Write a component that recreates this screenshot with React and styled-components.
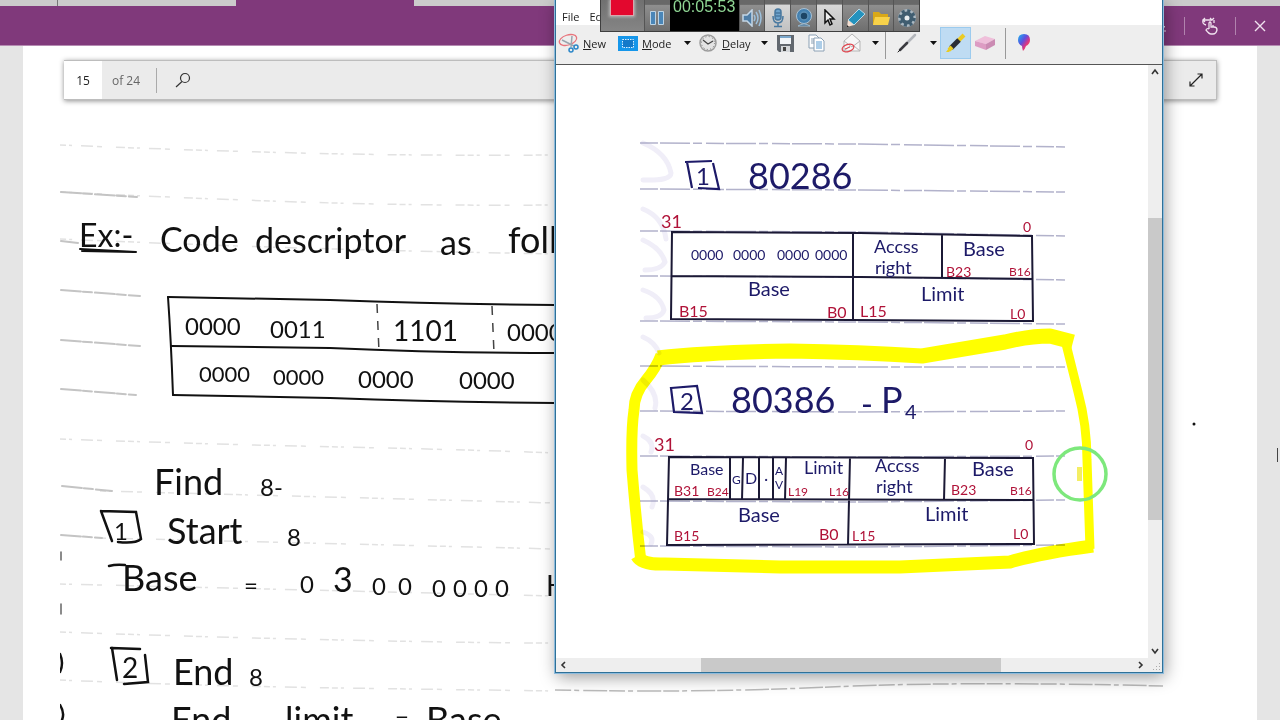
import React from "react";
import styled, { createGlobalStyle } from "styled-components";

const Global = createGlobalStyle`
  * { box-sizing: border-box; }
  html, body { margin: 0; padding: 0; }
  body { font-family: "Open Sans", "Noto Sans", sans-serif; overflow: hidden; }
  button { font: inherit; color: inherit; border: 0; padding: 0; margin: 0; background: none; }
  svg { display: block; flex: none; }
`;

const Desktop = styled.div`
  position: relative;
  height: 100vh;
  overflow: hidden;
  background: #fff;
`;

/* ---------- document reader ---------- */
const Reader = styled.main`
  display: flex;
  flex-direction: column;
  height: 100%;
`;
const TabStrip = styled.nav`
  display: flex;
  flex: none;
  height: 6px;
  background: #cbcbcb;
`;
const Tab = styled.button`
  width: ${(p) => p.$width}px;
  background: ${(p) => (p.$active ? "#80397b" : "transparent")};
  border-right: ${(p) => (p.$divider ? "1px solid #777" : "0")};
`;
const TitleBar = styled.header`
  display: flex;
  flex: none;
  align-items: center;
  justify-content: flex-end;
  height: 40px;
  background: #80397b;
  border-bottom: 1px solid #b58bb2;
  color: #f0e2ef;
`;
const TitleButton = styled.button`
  display: grid;
  place-items: center;
  width: ${(p) => p.$width || 50}px;
  height: 18px;
  padding-left: ${(p) => (p.$last ? 4 : 0)}px;
  border-left: ${(p) => (p.$divider ? "1px solid #b183ae" : "0")};
`;
const PageArea = styled.div`
  flex: 1;
  min-height: 0;
  overflow: hidden;
  padding: 0 23px;
  background: linear-gradient(90deg, #e5e5e5 23px, #fff 23px, #fff calc(100% - 23px), #e5e5e5 calc(100% - 23px));
`;
const PageTools = styled.div`
  display: flex;
  align-items: center;
  height: 40px;
  margin: 14px 40px 0 41px;
  background: #ebebeb;
  border: 1px solid #bdbdbd;
  border-left: 0;
  box-shadow: 0 1px 5px rgba(0, 0, 0, 0.45);
  font-size: 12px;
  color: #666;
`;
const PageNumber = styled.input`
  width: 38px;
  height: 38px;
  border: 0;
  background: #fff;
  text-align: center;
  font: 12px "Open Sans", sans-serif;
  color: #222;
`;
const PageTotal = styled.label`
  padding: 0 16px 0 10px;
`;
const ToolRule = styled.span`
  width: 1px;
  height: 25px;
  background: #aaa;
`;
const PageToolButton = styled.button`
  display: grid;
  place-items: center;
  width: 40px;
  height: 38px;
  margin-left: ${(p) => (p.$end ? "auto" : "6px")};
`;
const PageScan = styled.svg`
  margin-left: 37px;
`;
const ScrollMark = styled.span`
  position: absolute;
  right: 2px;
  top: 448px;
  width: 1px;
  height: 14px;
  background: #444;
`;

/* ---------- snipping window ---------- */
const SnipWindow = styled.section`
  position: absolute;
  left: 555px;
  top: 0;
  width: 608px;
  height: 673px;
  display: flex;
  flex-direction: column;
  background: #fff;
  border: 1px solid #2f7198;
  border-top: 0;
  box-shadow: 0 0 0 1px #8dbbdc, 2px 4px 16px rgba(0, 0, 0, 0.4);
`;
const MenuBar = styled.div`
  display: flex;
  flex: none;
  align-items: flex-end;
  gap: 10px;
  height: 25px;
  padding: 0 6px;
  font-size: 11px;
  line-height: 16px;
  color: #222;
`;
const SnipTools = styled.div`
  display: flex;
  flex: none;
  align-items: center;
  height: 40px;
  padding: 0 2px 3px;
  background: #eee;
  border-bottom: 1px solid #555;
  font-size: 11px;
  color: #222;
`;
const ToolButton = styled.button`
  display: flex;
  align-items: center;
  justify-content: ${(p) => (p.$label ? "flex-start" : "center")};
  gap: 4px;
  flex: none;
  width: ${(p) => p.$width}px;
  height: 32px;
  background: ${(p) => (p.$selected ? "#bfdcf3" : "transparent")};
  outline: ${(p) => (p.$selected ? "1px solid #9ccbee" : "0")};
  outline-offset: -1px;
`;
const Key = styled.u`
  text-decoration-thickness: 1px;
  text-underline-offset: 1px;
`;
const Separator = styled.span`
  flex: none;
  width: 1px;
  height: 31px;
  margin-left: ${(p) => (p.$spaced ? 6 : 0)}px;
  background: #999;
`;
const SnipBody = styled.div`
  flex: 1;
  min-height: 0;
  display: grid;
  grid-template-columns: 1fr 14px;
  grid-template-rows: 1fr 14px;
`;
const Canvas = styled.div`
  overflow: hidden;
`;
const Track = styled.div`
  display: flex;
  flex-direction: ${(p) => (p.$vertical ? "column" : "row")};
  background: #eee;
`;
const ArrowButton = styled.button`
  display: grid;
  place-items: center;
  width: 14px;
  height: 14px;
`;
const TrackSpace = styled.span`
  flex: ${(p) => p.$share} 0 0;
`;
const Thumb = styled.span`
  flex: ${(p) => p.$share} 0 0;
  background: #c9c9c9;
`;
const Corner = styled.div`
  display: grid;
  place-items: end;
  background: #eee;
`;

/* ---------- screen recorder ---------- */
const Recorder = styled.aside`
  position: absolute;
  left: 600px;
  top: 0;
  width: 320px;
  height: 32px;
  display: flex;
  background: #6b6b6b;
  border: 1px solid #3f3f3f;
  border-top: 0;
`;
const RecordButton = styled.button`
  width: 43px;
  display: flex;
  justify-content: center;
  background: linear-gradient(#707070, #858585);
`;
const RecordSquare = styled.span`
  width: 24px;
  height: 16px;
  background: #e3082e;
  border: 1px solid #d9a5ab;
  border-top: 0;
  box-shadow: 0 0 3px 1px #b9b9b9;
`;
const Cell = styled.button`
  display: grid;
  place-items: center;
  width: ${(p) => p.$width || 26}px;
  height: 31px;
  padding-top: 5px;
  border-left: 1px solid #555;
  background: ${(p) =>
    p.$lit
      ? "linear-gradient(#686868 4px, #555 4px, #d8d8d8 5px, #c1c1c1)"
      : "linear-gradient(#686868 4px, #4c4c4c 4px, #8f8f8f 5px, #6e6e6e)"};
`;
const Timer = styled.output`
  width: 69px;
  height: 31px;
  background: #000;
  color: #8fd694;
  font: 16px/14px "Liberation Sans", sans-serif;
  text-align: center;
`;

const Caret = () => (
  <svg width="8" height="5" viewBox="0 0 8 5" aria-hidden="true">
    <path d="M0 0h7L3.500 4z" fill="#111" />
  </svg>
);
const Chevron = ({ d }) => (
  <svg width="8" height="8" viewBox="0 0 8 8" fill="none" stroke="#333" strokeWidth="1.600" aria-hidden="true">
    <path d={d} />
  </svg>
);

const INK = "#111";
const BLUE = "#1d1a68";
const RED = "#b01238";

/* A handwritten word: [x, baseline, size, text] */
const Words = ({ items, fill }) => (
  <g fill={fill} fontFamily="Lato, sans-serif">
    {items.map(([x, y, size, text], i) => (
      <text key={i} x={x} y={y} fontSize={size}>
        {text}
      </text>
    ))}
  </g>
);

const NOTE_WORDS = [
  [79, 247, 32, "Ex:-"],
  [160, 252, 34, "Code"],
  [255, 253, 34, "descriptor"],
  [440, 255, 34, "as"],
  [508, 253, 36, "follows"],
  [185, 335, 24, "0000"],
  [270, 338, 24, "0011"],
  [393, 341, 28, "1101"],
  [507, 341, 24, "0000"],
  [199, 382, 22, "0000"],
  [273, 385, 22, "0000"],
  [358, 388, 24, "0000"],
  [459, 389, 24, "0000"],
  [154, 495, 36, "Find"],
  [260, 496, 24, "8-"],
  [114, 540, 24, "1"],
  [167, 544, 36, "Start"],
  [287, 546, 24, "8"],
  [122, 591, 36, "Base"],
  [244, 594, 24, "="],
  [300, 593, 24, "0"],
  [333, 592, 34, "3"],
  [372, 595, 24, "0"],
  [398, 595, 24, "0"],
  [432, 597, 24, "0"],
  [453, 597, 24, "0"],
  [474, 597, 24, "0"],
  [495, 597, 24, "0"],
  [546, 596, 28, "H"],
  [122, 678, 28, "2"],
  [173, 685, 36, "End"],
  [249, 686, 24, "8"],
  [171, 733, 36, "End"],
  [285, 733, 36, "limit"],
  [395, 727, 24, "="],
  [426, 733, 36, "Base"],
];

const BLUE_WORDS = [
  [696, 185, 24, "1"],
  [748, 189, 36, "80286"],
  [691, 260, 14, "0000"],
  [733, 260, 14, "0000"],
  [777, 260, 14, "0000"],
  [815, 260, 14, "0000"],
  [874, 253, 18, "Accss"],
  [875, 274, 18, "right"],
  [963, 256, 20, "Base"],
  [748, 296, 20, "Base"],
  [921, 301, 20, "Limit"],
  [680, 410, 24, "2"],
  [731, 413, 36, "80386"],
  [861, 416, 32, "-"],
  [881, 413, 36, "P"],
  [905, 419, 20, "4"],
  [690, 475, 16, "Base"],
  [732, 484, 12, "G"],
  [745, 484, 16, "D"],
  [764, 481, 18, "."],
  [775, 475, 12, "A"],
  [775, 489, 12, "V"],
  [804, 474, 18, "Limit"],
  [875, 472, 18, "Accss"],
  [876, 493, 18, "right"],
  [972, 476, 20, "Base"],
  [738, 522, 20, "Base"],
  [925, 521, 20, "Limit"],
];

const RED_WORDS = [
  [661, 228, 18, "31"],
  [1023, 232, 14, "0"],
  [946, 277, 14, "B23"],
  [1009, 276, 12, "B16"],
  [679, 317, 16, "B15"],
  [827, 318, 16, "B0"],
  [860, 317, 16, "L15"],
  [1010, 319, 14, "L0"],
  [654, 451, 18, "31"],
  [1025, 450, 14, "0"],
  [674, 496, 14, "B31"],
  [707, 496, 12, "B24"],
  [788, 496, 12, "L19"],
  [829, 496, 12, "L16"],
  [951, 495, 14, "B23"],
  [1010, 495, 12, "B16"],
  [674, 541, 14, "B15"],
  [819, 540, 16, "B0"],
  [852, 541, 14, "L15"],
  [1013, 539, 14, "L0"],
];

const NoteScan = () => (
  <PageScan width="1150" height="620" viewBox="60 100 1150 620" fill="none" strokeLinecap="round">
    <g stroke="#e2e2e2" strokeWidth="1.500" strokeDasharray="6 3 3 9 12 4 5 14 9 3" strokeLinecap="butt">
      <path d="M60 145Q180 150 300 153T555 155M60 192Q180 198 300 202T555 205M60 239Q200 245 300 248T555 254" />
      <path d="M60 439Q200 444 340 447T555 453M100 491L555 503M100 538L555 549M60 584L555 596" />
      <path d="M60 632Q200 637 340 640T555 643M60 680Q200 686 340 688T555 691" />
    </g>
    <path
      d="M555 690Q700 693 830 687T1163 686"
      stroke="#bbb"
      strokeWidth="1.500"
      strokeDasharray="16 3 5 4 24 2"
      strokeLinecap="butt"
    />
    <g stroke="#c4c4c4" strokeWidth="2" strokeDasharray="20 2 9 3">
      <path d="M61 192L137 197" />
      <path d="M61 241L78 243M61 290L140 296M61 340L140 346M61 389L136 395M62 486L112 491M61 535L102 538" />
    </g>
    <path d="M61 552v8M61 604v10" stroke="#666" strokeWidth="1.500" />
    <path d="M60 654q4 9 0 18M60 705q5 8 2 15" stroke={INK} strokeWidth="2.500" />
    <g stroke={INK} strokeWidth="2">
      <path d="M80 249L136 252M82 251L134 252" />
      <path d="M168 297Q171 340 173 395" />
      <path d="M168 297L330 300Q440 304 555 305M171 346L330 348Q440 353 555 353M173 395L330 398Q440 402 555 403" />
    </g>
    <path d="M377 304L379 352M492 306L494 353" stroke="#444" strokeWidth="1.500" strokeDasharray="9 8" strokeLinecap="butt" />
    <g stroke={INK} strokeWidth="2.500">
      <path d="M101 511L136 512L141 539Q135 544 118 542M101 511L112 541" />
      <path d="M111 648L140 649M112 648L117 680M145 655L148 682L124 684" />
    </g>
    <path d="M109 566Q116 564 125 565" stroke={INK} strokeWidth="2.500" />
    <Words items={NOTE_WORDS} fill={INK} />
    <circle cx="1194" cy="424" r="1.500" fill="#111" />
  </PageScan>
);

const RULES = [
  [143, 147],
  [189, 192],
  [231, 236],
  [276, 280],
  [321, 324],
  [366, 367],
  [411, 411],
  [456, 456],
  [501, 500],
  [546, 545],
];

const SnipScan = () => (
  <svg width="592" height="592" viewBox="556 65 592 592" fill="none">
    <g stroke="#f0eef8" strokeWidth="5" strokeLinecap="round">
      <path d="M643 143q24 10 28 30q0 8-28 7M643 209q20 8 23 30M643 240q18 8 22 22q-4 8-20 8M643 290q18 6 21 20q-2 8-18 8" />
      <path d="M643 337q12 5 16 16M643 380q16 14 12 28M643 436q12 6 8 16M643 487q14 8 9 20M643 532q12 4 8 12" />
    </g>
    {RULES.map(([a, b]) => (
      <path
        key={a}
        d={`M640 ${a}L860 ${a + 1}L1065 ${b}`}
        stroke="#9291b5"
        strokeWidth="1.500"
        strokeDasharray="18 2 30 3 9 4"
        opacity="0.700"
      />
    ))}
    <g stroke="#1b1935" strokeWidth="2">
      <path d="M672 232L860 233L1032 236L1033 321L850 320L671 319ZM672 276L860 277L1033 279M853 234V320M942 235V278" />
      <path d="M669 457L1033 458L1034 544L667 545ZM669 499L1034 500M850 457L848 545M945 458L944 500" />
      <path d="M730 457V499M743 458L742 500M759 458V500M773 458V500M786 458L785 500" />
    </g>
    <g stroke={BLUE} strokeWidth="2.200">
      <path d="M685 162L712 161M687 162L692 188M713 163L719 189L698 188" />
      <path d="M671 388L697 386L702 413L674 412Z" />
    </g>
    <Words items={BLUE_WORDS} fill={BLUE} />
    <Words items={RED_WORDS} fill={RED} />
    <g stroke="#ffff00" style={{ mixBlendMode: "multiply" }}>
      <path
        d="M1073 342L1050 336Q1030 336 1005 342L922 356Q860 352 790 351Q710 352 658 358"
        strokeWidth="15"
        strokeLinejoin="round"
      />
      <path d="M661 355Q656 368 646 380Q634 394 634 410Q631 430 632 470Q636 520 641 562" strokeWidth="11" />
      <path d="M637 556Q642 565 665 564L780 567L900 567L1010 562Q1040 553 1093 546" strokeWidth="13" />
      <path d="M1066 344L1078 392Q1087 425 1087 460L1090 549" strokeWidth="9" />
    </g>
    <rect x="1077" y="467" width="5" height="14" fill="#f4ee63" />
    <circle cx="1080" cy="474" r="26" stroke="#7de87c" strokeWidth="3.500" />
  </svg>
);

export default function App() {
  return (
    <Desktop>
      <Global />
      <Reader>
        <TabStrip>
          <Tab $width={58} $divider aria-label="Tab 1" />
          <Tab $width={178} aria-label="Tab 2" />
          <Tab $width={178} $active aria-label="Tab 3" />
        </TabStrip>
        <TitleBar>
          <TitleButton aria-label="Share" $width={44}>
            <svg width="14" height="14" viewBox="0 0 14 14" fill="none" stroke="currentColor">
              <path d="M3 8h7M7 5l3 3M3 12h8" />
            </svg>
          </TitleButton>
          <TitleButton aria-label="Touch mode" $divider $width={51}>
            <svg width="18" height="18" viewBox="0 0 18 18" fill="none" stroke="currentColor" strokeWidth="1.300">
              <path d="M5 8Q1 7 2 3h9M4 1L2 3l2 2M9 1l2 2 2-2M13 3v3" />
              <path d="M8 12V6q1-2 2 0v4h3q3 0 3 3-1 4-4 4h-2q-2 0-5-4 1-2 3-1M12 10V8" />
            </svg>
          </TitleButton>
          <TitleButton aria-label="Close" $divider $last $width={45}>
            <svg width="12" height="12" viewBox="0 0 12 12" fill="none" stroke="currentColor" strokeWidth="1.400">
              <path d="M1 1l10 10M11 1L1 11" />
            </svg>
          </TitleButton>
        </TitleBar>
        <PageArea>
          <PageTools>
            <PageNumber id="page" defaultValue="15" />
            <PageTotal htmlFor="page">of 24</PageTotal>
            <ToolRule />
            <PageToolButton aria-label="Search">
              <svg width="16" height="16" viewBox="0 0 16 16" fill="none" stroke="#333" strokeWidth="1.200">
                <circle cx="10" cy="6" r="4.500" />
                <path d="M7 9.500L1 15" />
              </svg>
            </PageToolButton>
            <PageToolButton aria-label="Full screen" $end>
              <svg width="14" height="14" viewBox="0 0 14 14" fill="none" stroke="#222" strokeWidth="1.200">
                <path d="M1 13L13 1M8.500 1H13v4.500M1 8.500V13h4.500" />
              </svg>
            </PageToolButton>
          </PageTools>
          <NoteScan />
        </PageArea>
      </Reader>
      <ScrollMark />

      <SnipWindow>
        <MenuBar>
          <button>File</button>
          <button>Edit</button>
        </MenuBar>
        <SnipTools>
          <ToolButton $width={60} $label>
            <svg width="21" height="20" viewBox="0 0 21 20" fill="none">
              <ellipse cx="10" cy="7" rx="9" ry="5" stroke="#e8747c" strokeWidth="1.300" transform="rotate(-18 10 7)" />
              <path d="M4 7l12 6M14 3l-1 11" stroke="#9aa5af" strokeWidth="1.500" />
              <circle cx="18" cy="14" r="2" stroke="#2a86c8" strokeWidth="1.500" />
              <circle cx="13" cy="17" r="2" stroke="#2a86c8" strokeWidth="1.500" />
            </svg>
            <span><Key>N</Key>ew</span>
          </ToolButton>
          <ToolButton $width={60} $label>
            <svg width="20" height="15" viewBox="0 0 20 15">
              <rect width="20" height="15" fill="#1596ea" />
              <rect x="4.500" y="3.500" width="11" height="8" fill="#1479c9" stroke="#d8efff" strokeDasharray="1.500 1" />
            </svg>
            <span><Key>M</Key>ode</span>
          </ToolButton>
          <ToolButton $width={20} aria-label="Mode options"><Caret /></ToolButton>
          <ToolButton $width={59} $label>
            <svg width="20" height="20" viewBox="0 0 20 20" fill="none">
              <circle cx="10" cy="10" r="8" fill="#e4e4e4" stroke="#9c9c9c" strokeWidth="1.500" />
              <circle cx="10" cy="10" r="6.500" stroke="#777" strokeDasharray="1 2.400" />
              <path d="M5 7l5 4 5-3" stroke="#444" strokeWidth="1.200" />
            </svg>
            <span><Key>D</Key>elay</span>
          </ToolButton>
          <ToolButton $width={16} aria-label="Delay options"><Caret /></ToolButton>
          <ToolButton $width={24} aria-label="Save">
            <svg width="17" height="17" viewBox="0 0 17 17">
              <path d="M0 0h17v17H2l-2-2z" fill="#62686f" />
              <path d="M3 1h11v8H3z" fill="#f2f5f8" />
              <path d="M3 1h11v2H3z" fill="#7ba8cc" />
              <path d="M4 11h9v6H4z" fill="#d5d8db" />
              <path d="M6 12h3v4H6z" fill="#444" />
            </svg>
          </ToolButton>
          <ToolButton $width={38} aria-label="Copy">
            <svg width="17" height="18" viewBox="0 0 17 18" fill="#fff" stroke="#8ba0b4">
              <path d="M1 1h7l3 3v10H1zM3 5h5M3 7h5M3 9h5" />
              <path d="M6 4h7l3 3v10H6z" />
              <path d="M8 8h6M8 10h6M8 12h6M8 14h6" stroke="#5b9bd0" />
            </svg>
          </ToolButton>
          <ToolButton $width={32} aria-label="Send snip">
            <svg width="21" height="20" viewBox="0 0 21 20" fill="none" stroke="#b5b5b5">
              <path d="M3 8l8-7 8 7v10H3z" fill="#f7f7f7" />
              <path d="M3 8l8 6 8-6M3 18l6-5M19 18l-6-5" />
              <ellipse cx="7" cy="15" rx="6" ry="3.500" stroke="#e0454e" strokeWidth="1.300" transform="rotate(-18 7 15)" />
              <path d="M4 16l5-2" stroke="#e0454e" />
            </svg>
          </ToolButton>
          <ToolButton $width={18} aria-label="Send options"><Caret /></ToolButton>
          <Separator />
          <ToolButton $width={42} aria-label="Pen">
            <svg width="20" height="20" viewBox="0 0 20 20" fill="none" strokeLinecap="round">
              <path d="M9 11L18 2" stroke="#b4b7bc" strokeWidth="2.500" />
              <path d="M3 17L10 10" stroke="#3b3b40" strokeWidth="2.500" />
              <path d="M1 19L3 17" stroke="#222" />
            </svg>
          </ToolButton>
          <ToolButton $width={12} aria-label="Pen options"><Caret /></ToolButton>
          <ToolButton $width={31} $selected aria-label="Highlighter">
            <svg width="20" height="20" viewBox="0 0 20 20" fill="none">
              <path d="M12 8L18 2" stroke="#ebcb24" strokeWidth="4" />
              <path d="M5 15L13 7" stroke="#292d35" strokeWidth="5" />
              <path d="M3 17L6 14" stroke="#e9cc22" strokeWidth="4" />
              <path d="M0 19h3l2-2-2-2z" fill="#e9cc22" />
            </svg>
          </ToolButton>
          <ToolButton $width={28} aria-label="Eraser">
            <svg width="20" height="14" viewBox="0 0 20 14">
              <path d="M0 5L10 0l10 3-9 5z" fill="#efbfda" />
              <path d="M0 5l11 3v6L0 10z" fill="#dd9cc3" />
              <path d="M11 8l9-5v6l-9 5z" fill="#cb8bb3" />
            </svg>
          </ToolButton>
          <Separator $spaced />
          <ToolButton $width={36} aria-label="Edit with Paint 3D">
            <svg width="14" height="18" viewBox="0 0 14 18">
              <defs>
                <linearGradient id="drop" x1="0" y1="0" x2="1" y2="1">
                  <stop offset="0" stopColor="#18b8f0" />
                  <stop offset="0.400" stopColor="#5b50e0" />
                  <stop offset="0.650" stopColor="#df3480" />
                  <stop offset="1" stopColor="#fb8b33" />
                </linearGradient>
              </defs>
              <path d="M7 0q6 0 6 6 0 4-4 6-1 3-3 5-1-3-1-5-4-2-4-6 0-6 6-6z" fill="url(#drop)" />
            </svg>
          </ToolButton>
        </SnipTools>
        <SnipBody>
          <Canvas><SnipScan /></Canvas>
          <Track $vertical>
            <ArrowButton aria-label="Scroll up"><Chevron d="M1 6l3-4 3 4" /></ArrowButton>
            <TrackSpace $share={139} />
            <Thumb $share={301} />
            <TrackSpace $share={124} />
            <ArrowButton aria-label="Scroll down"><Chevron d="M1 2l3 4 3-4" /></ArrowButton>
          </Track>
          <Track>
            <ArrowButton aria-label="Scroll left"><Chevron d="M6 1L3 4l3 3" /></ArrowButton>
            <TrackSpace $share={131} />
            <Thumb $share={300} />
            <TrackSpace $share={133} />
            <ArrowButton aria-label="Scroll right"><Chevron d="M2 1l3 3-3 3" /></ArrowButton>
          </Track>
          <Corner>
            <svg width="9" height="9" viewBox="0 0 9 9" fill="#aaa">
              <path d="M6 0h1v1H6zM3 3h1v1H3zM6 3h1v1H6zM0 6h1v1H0zM3 6h1v1H3zM6 6h1v1H6z" />
            </svg>
          </Corner>
        </SnipBody>
      </SnipWindow>

      <Recorder>
        <RecordButton aria-label="Stop recording"><RecordSquare /></RecordButton>
        <Cell aria-label="Pause">
          <svg width="18" height="18" viewBox="0 0 18 18" fill="#4a86b8" stroke="#bcd3e4">
            <path d="M2.500 2.500h5v13h-5zM10.500 2.500h5v13h-5z" />
          </svg>
        </Cell>
        <Timer>00:05:53</Timer>
        <Cell aria-label="Sound">
          <svg width="20" height="18" viewBox="0 0 20 18" fill="none" stroke="#c3d6e6" strokeWidth="1.500">
            <path d="M1 6h4l5-5v16l-5-5H1z" fill="#4e7da6" />
            <path d="M12 6q2 3 0 6M14 3q4 6 0 12M17 1q4 8 0 16" stroke="#9dc0dc" />
          </svg>
        </Cell>
        <Cell $lit aria-label="Microphone">
          <svg width="16" height="20" viewBox="0 0 16 20" fill="none" stroke="#48789f" strokeWidth="1.500">
            <rect x="5" y="1" width="6" height="11" rx="3" fill="#6ea3cc" />
            <path d="M3 8q0 7 5 7t5-7M8 15v3M4 18.500h8M5 5h6M5 8h6" />
          </svg>
        </Cell>
        <Cell aria-label="Webcam">
          <svg width="18" height="20" viewBox="0 0 18 20" fill="none">
            <circle cx="9" cy="8" r="7.500" fill="#4380b0" stroke="#a9c1d3" />
            <circle cx="9" cy="8" r="4" fill="#1d4565" stroke="#5c90b6" strokeWidth="1.500" />
            <path d="M3 18q6-4 12 0z" fill="#315f85" stroke="#9bb8cc" />
          </svg>
        </Cell>
        <Cell $lit aria-label="Pointer">
          <svg width="12" height="18" viewBox="0 0 12 18" fill="#eee" stroke="#111" strokeWidth="1.500">
            <path d="M1 1v13l3-3 2 5 2-1-2-5h4z" />
          </svg>
        </Cell>
        <Cell aria-label="Draw">
          <svg width="20" height="20" viewBox="0 0 20 20">
            <path d="M13 1l6 5L8 17l-6-5z" fill="#2492bd" stroke="#b9d9e7" />
            <path d="M2 12l6 5-7 2z" fill="#f3ded0" />
            <path d="M1 17v2h2z" fill="#222" />
          </svg>
        </Cell>
        <Cell $width={25} aria-label="Open folder">
          <svg width="18" height="15" viewBox="0 0 18 15">
            <path d="M1 1h6l2 2h7v11H1z" fill="#d9a818" />
            <path d="M3 6h15l-2 8H1z" fill="#f8d24a" />
          </svg>
        </Cell>
        <Cell aria-label="Settings">
          <svg width="20" height="20" viewBox="0 0 20 20" fill="none">
            <circle cx="10" cy="10" r="9" fill="#a9b7c1" />
            <circle cx="10" cy="10" r="7" stroke="#405d70" strokeWidth="3.500" strokeDasharray="3 2.500" />
            <circle cx="10" cy="10" r="4.500" stroke="#405d70" strokeWidth="4" fill="#e8edf0" />
          </svg>
        </Cell>
      </Recorder>
    </Desktop>
  );
}
